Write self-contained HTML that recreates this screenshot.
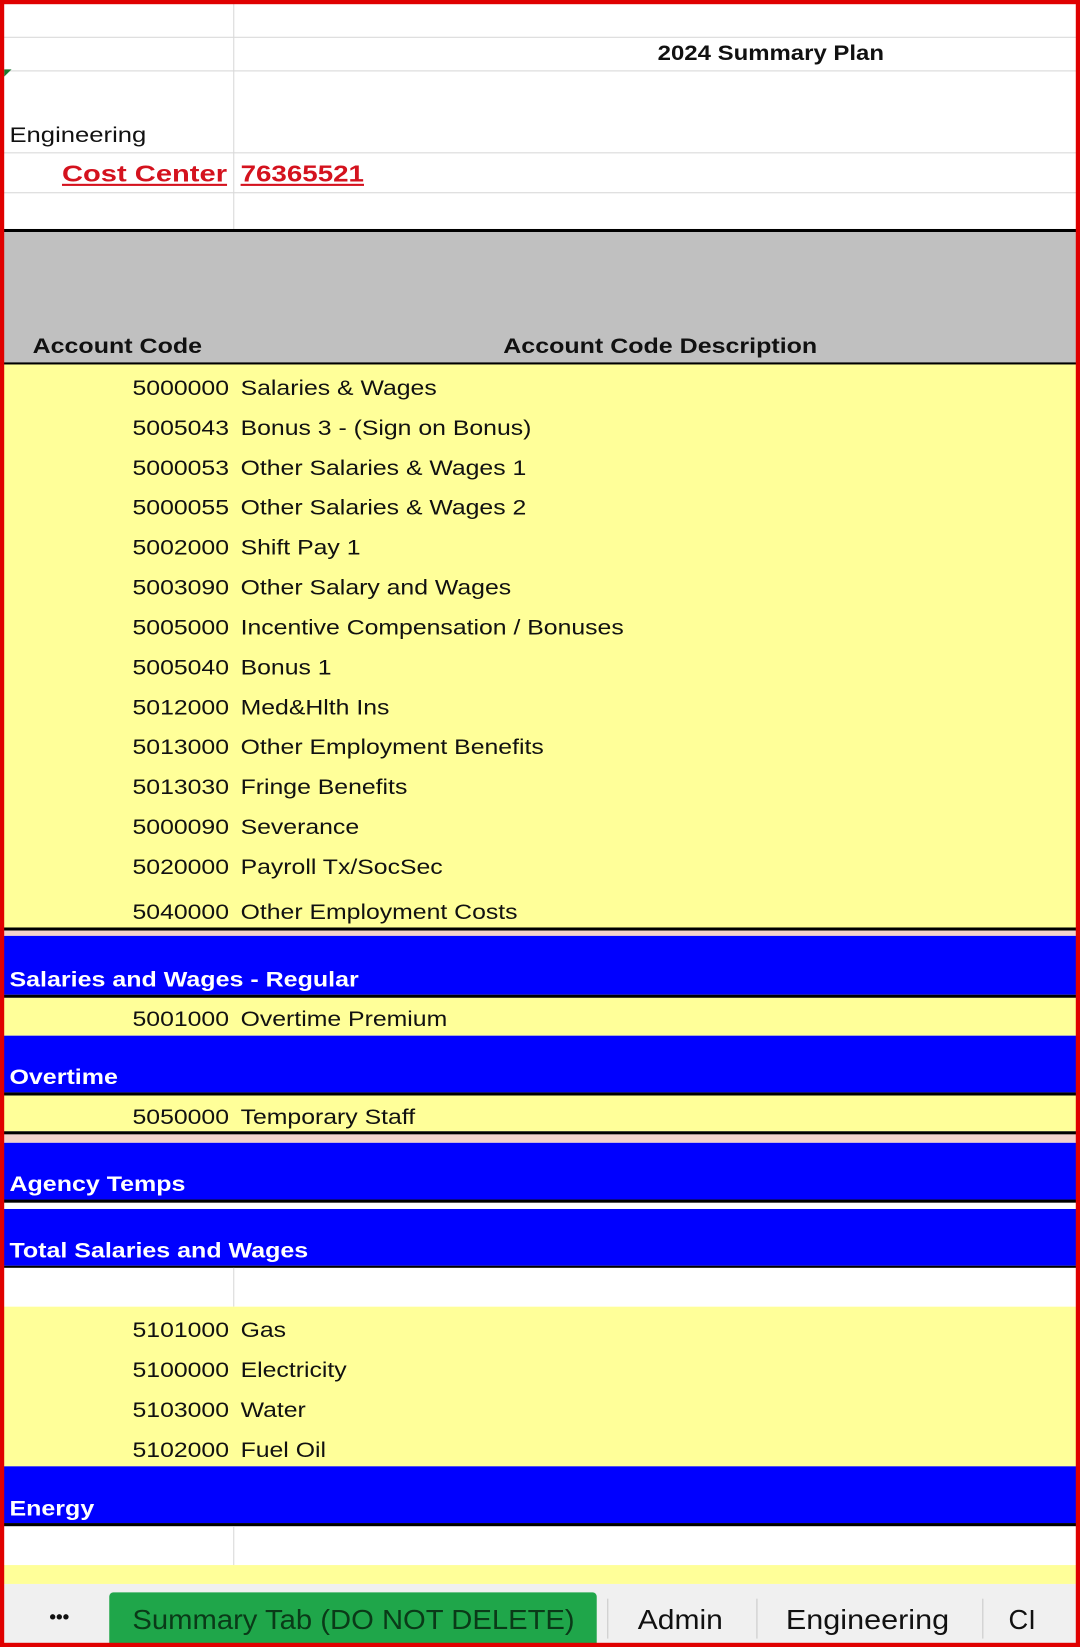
<!DOCTYPE html>
<html><head><meta charset="utf-8"><style>
html,body{margin:0;padding:0;background:#fff;overflow:hidden}
#w{position:absolute;left:0;top:0;width:1028px;height:1568px;transform:scale(1.05058,1.05038);transform-origin:0 0;font-family:"Liberation Sans","DejaVu Sans",sans-serif;color:#111}
.a{position:absolute;left:0;width:1028px}
.t{position:absolute;white-space:nowrap;font-size:20px;line-height:24px;transform-origin:0 50%;transform:scaleX(1.18)}
.b{font-weight:bold}
.y{background:#ffff99}
.bl{background:#0000ff}
.g{background:#c0c0c0}
.hl{position:absolute;left:0;width:1028px;height:1px;background:#d8d8d8}
.vl{position:absolute;left:222px;width:1px;background:#d8d8d8}
.k{position:absolute;left:0;width:1028px;background:#000}
.wt{color:#fff;font-weight:bold;left:9px;transform:scaleX(1.19)}
.code{left:0;width:218px;text-align:right;transform-origin:100% 50%}
.desc{left:229px}
.tab{font-size:26px;line-height:30px}
</style></head><body><div id="w">
<div class="hl" style="top:35px"></div>
<div class="hl" style="top:67px"></div>
<div class="hl" style="top:145px"></div>
<div class="hl" style="top:183px"></div>
<div class="vl" style="top:0;height:218px"></div>
<div class="t b" style="left:626px;top:39px;transform:scaleX(1.14)">2024 Summary Plan</div>
<div style="position:absolute;left:4px;top:66px;width:0;height:0;border-left:7px solid #1a7a30;border-bottom:7px solid transparent"></div>
<div class="t" style="left:9px;top:117px;transform:scaleX(1.22)">Engineering</div>
<div class="t b" style="left:59px;top:154px;color:#d4121e;text-decoration:underline;font-size:22px;transform:scaleX(1.26)">Cost Center</div>
<div class="t b" style="left:229px;top:154px;color:#d4121e;text-decoration:underline;font-size:22px;transform:scaleX(1.2)">76365521</div>
<div class="k" style="top:218px;height:3px"></div>
<div class="a g" style="top:221px;height:124px"></div>
<div class="t b" style="left:31px;top:318px;transform:scaleX(1.19)">Account Code</div>
<div class="t b" style="left:479px;top:318px;transform:scaleX(1.19)">Account Code Description</div>
<div class="k" style="top:345px;height:2px"></div>
<div class="a y" style="top:347px;height:536px"></div>
<div class="t code" style="top:358px">5000000</div><div class="t desc" style="top:358px">Salaries &amp; Wages</div>
<div class="t code" style="top:396px">5005043</div><div class="t desc" style="top:396px">Bonus 3 - (Sign on Bonus)</div>
<div class="t code" style="top:434px">5000053</div><div class="t desc" style="top:434px">Other Salaries &amp; Wages 1</div>
<div class="t code" style="top:472px">5000055</div><div class="t desc" style="top:472px">Other Salaries &amp; Wages 2</div>
<div class="t code" style="top:510px">5002000</div><div class="t desc" style="top:510px">Shift Pay 1</div>
<div class="t code" style="top:548px">5003090</div><div class="t desc" style="top:548px">Other Salary and Wages</div>
<div class="t code" style="top:586px">5005000</div><div class="t desc" style="top:586px">Incentive Compensation / Bonuses</div>
<div class="t code" style="top:624px">5005040</div><div class="t desc" style="top:624px">Bonus 1</div>
<div class="t code" style="top:662px">5012000</div><div class="t desc" style="top:662px">Med&amp;Hlth Ins</div>
<div class="t code" style="top:700px">5013000</div><div class="t desc" style="top:700px">Other Employment Benefits</div>
<div class="t code" style="top:738px">5013030</div><div class="t desc" style="top:738px">Fringe Benefits</div>
<div class="t code" style="top:776px">5000090</div><div class="t desc" style="top:776px">Severance</div>
<div class="t code" style="top:814px">5020000</div><div class="t desc" style="top:814px">Payroll Tx/SocSec</div>
<div class="t code" style="top:857px">5040000</div><div class="t desc" style="top:857px">Other Employment Costs</div>
<div class="k" style="top:883px;height:3px"></div>
<div class="a" style="top:886px;height:5px;background:#f2d2cc"></div>
<div class="a bl" style="top:891px;height:56px"></div>
<div class="t wt" style="top:921px">Salaries and Wages - Regular</div>
<div class="k" style="top:947px;height:3px"></div>
<div class="a y" style="top:950px;height:36px"></div>
<div class="t code" style="top:959px">5001000</div><div class="t desc" style="top:959px">Overtime Premium</div>
<div class="a bl" style="top:986px;height:54px"></div>
<div class="t wt" style="top:1014px">Overtime</div>
<div class="k" style="top:1040px;height:3px"></div>
<div class="a y" style="top:1043px;height:34px"></div>
<div class="t code" style="top:1052px">5050000</div><div class="t desc" style="top:1052px">Temporary Staff</div>
<div class="k" style="top:1077px;height:3px"></div>
<div class="a" style="top:1080px;height:8px;background:#f2d2cc"></div>
<div class="a bl" style="top:1088px;height:54px"></div>
<div class="t wt" style="top:1116px">Agency Temps</div>
<div class="k" style="top:1142px;height:3px"></div>
<div class="a bl" style="top:1151px;height:54px"></div>
<div class="t wt" style="top:1179px">Total Salaries and Wages</div>
<div class="k" style="top:1205px;height:2px"></div>
<div class="vl" style="top:1207px;height:37px"></div>
<div class="a y" style="top:1244px;height:152px"></div>
<div class="t code" style="top:1255px">5101000</div><div class="t desc" style="top:1255px">Gas</div>
<div class="t code" style="top:1293px">5100000</div><div class="t desc" style="top:1293px">Electricity</div>
<div class="t code" style="top:1331px">5103000</div><div class="t desc" style="top:1331px">Water</div>
<div class="t code" style="top:1369px">5102000</div><div class="t desc" style="top:1369px">Fuel Oil</div>
<div class="a bl" style="top:1396px;height:54px"></div>
<div class="t wt" style="top:1425px">Energy</div>
<div class="k" style="top:1450px;height:3px"></div>
<div class="vl" style="top:1453px;height:37px"></div>
<div class="a y" style="top:1490px;height:18px"></div>
<div class="a" style="top:1508px;height:60px;background:#f0f0f0"></div>
<div class="t b" style="left:47px;top:1527px;font-size:18px;transform:none">•••</div>
<div style="position:absolute;left:104px;top:1516px;width:464px;height:52px;background:#1fa64a;border-radius:4px 4px 0 0"></div>
<div class="t tab" style="left:126px;top:1527px;color:#0a3a18;transform:scaleX(1.07)">Summary Tab (DO NOT DELETE)</div>
<div style="position:absolute;left:578px;top:1522px;width:1px;height:38px;background:#c8c8c8"></div>
<div class="t tab" style="left:607px;top:1527px;transform:scaleX(1.1)">Admin</div>
<div style="position:absolute;left:720px;top:1522px;width:1px;height:38px;background:#c8c8c8"></div>
<div class="t tab" style="left:748px;top:1527px;transform:scaleX(1.12)">Engineering</div>
<div style="position:absolute;left:935px;top:1522px;width:1px;height:38px;background:#c8c8c8"></div>
<div class="t tab" style="left:960px;top:1527px;transform:none">CI</div>
<div style="position:absolute;left:0;top:0;width:1020px;height:1560px;border:4px solid #e00000"></div>
</div></body></html>
